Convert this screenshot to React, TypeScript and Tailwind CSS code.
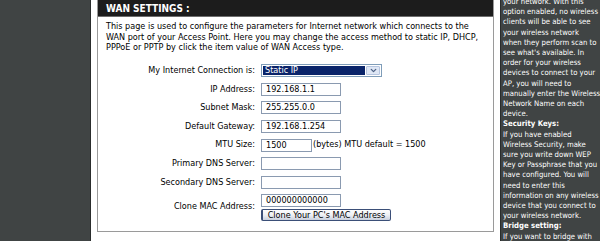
import { ChevronDown } from "lucide-react";

const font = "font-[family-name:'DejaVu_Sans_Condensed','DejaVu_Sans',sans-serif]";

function Field({ value = "", w = "w-[80px]" }: { value?: string; w?: string }) {
  return (
    <div
      className={`${w} h-[13px] border border-[#8a9ab0] bg-white pl-[4px] text-[9px] leading-[11px] text-black`}
    >
      {value}
    </div>
  );
}

function Row({ label, children }: { label: string; children: React.ReactNode }) {
  return (
    <div className="flex h-[18.6px] items-center">
      <div className="w-[163px] pr-[6px] text-right">{label}</div>
      {children}
    </div>
  );
}

const sideTop = [
  "your network. With this",
  "option enabled, no wireless",
  "clients will be able to see",
  "your wireless network",
  "when they perform scan to",
  "see what's available. In",
  "order for your wireless",
  "devices to connect to your",
  "AP, you will need to",
  "manually enter the Wireless",
  "Network Name on each",
  "device.",
];

const sideKeys = [
  "If you have enabled",
  "Wireless Security, make",
  "sure you write down WEP",
  "Key or Passphrase that you",
  "have configured. You will",
  "need to enter this",
  "information on any wireless",
  "device that you connect to",
  "your wireless network.",
];

export default function App() {
  return (
    <div className={`flex h-[241px] w-[600px] overflow-hidden bg-white ${font}`}>
      {/* left menu column */}
      <div className="w-[91px] shrink-0 border-r border-[#2a2d2d] bg-[#404444]" />

      {/* main content */}
      <div className="w-[409px] shrink-0 px-[6px]">
        <div className="h-[232px] border border-t-0 border-[#9a9a9a] text-[9px] text-black">
          <div className="flex h-[17px] items-center border-b border-[#6d6d6d] bg-[#1c1c1c] px-[8px] text-[10px] font-bold text-white">
            WAN SETTINGS :
          </div>

          <div className="px-[8px] pt-[4px] leading-[10.5px]">
            <p>This page is used to configure the parameters for Internet network which connects to the</p>
            <p>WAN port of your Access Point. Here you may change the access method to static IP, DHCP,</p>
            <p>PPPoE or PPTP by click the item value of WAN Access type.</p>
          </div>

          <div className="mt-[9px] flex flex-col">
            <Row label="My Internet Connection is:">
              <div className="flex h-[13px] w-[121px] items-center border border-[#7f9db9] bg-white p-[1px]">
                <div className="h-full flex-1 bg-[#0a246a] pl-[2px] text-[9px] leading-[9px] text-white">
                  Static IP
                </div>
                <div className="ml-[1px] flex h-full w-[14px] items-center justify-center rounded-[1px] border border-[#b6c5df] bg-[#dfe7f5]">
                  <ChevronDown className="h-[9px] w-[9px] text-[#4d6185]" strokeWidth={3.5} />
                </div>
              </div>
            </Row>
            <Row label="IP Address:">
              <Field value="192.168.1.1" />
            </Row>
            <Row label="Subnet Mask:">
              <Field value="255.255.0.0" />
            </Row>
            <Row label="Default Gateway:">
              <Field value="192.168.1.254" />
            </Row>
            <Row label="MTU Size:">
              <Field value="1500" w="w-[51px]" />
              <span className="pl-[1px]">(bytes) MTU default = 1500</span>
            </Row>
            <Row label="Primary DNS Server:">
              <Field />
            </Row>
            <Row label="Secondary DNS Server:">
              <Field />
            </Row>
            <div className="mt-[2px] flex items-center">
              <div className="w-[163px] pr-[6px] text-right">Clone MAC Address:</div>
              <div className="flex flex-col gap-[2px]">
                <Field value="000000000000" />
                <button className="h-[12px] w-[130px] rounded-[2px] border border-[#3b4f78] border-l-[2px] bg-gradient-to-b from-[#fdfdfd] via-[#eef0f5] to-[#c9d0de] text-[9px] leading-[10px] text-black">
                  Clone Your PC's MAC Address
                </button>
              </div>
            </div>
          </div>
        </div>
      </div>

      {/* help sidebar */}
      <div className="flex-1 border-l border-[#2a2d2d] bg-[#404444] pl-[2px] text-[7.7px] leading-[10.2px] text-white">
        <div className="-mt-[3px] whitespace-nowrap">
          {sideTop.map((l) => (
            <div key={l}>{l}</div>
          ))}
          <div className="font-bold">Security Keys:</div>
          {sideKeys.map((l) => (
            <div key={l}>{l}</div>
          ))}
          <div className="font-bold">Bridge setting:</div>
          <div>If you want to bridge with</div>
        </div>
      </div>
    </div>
  );
}
